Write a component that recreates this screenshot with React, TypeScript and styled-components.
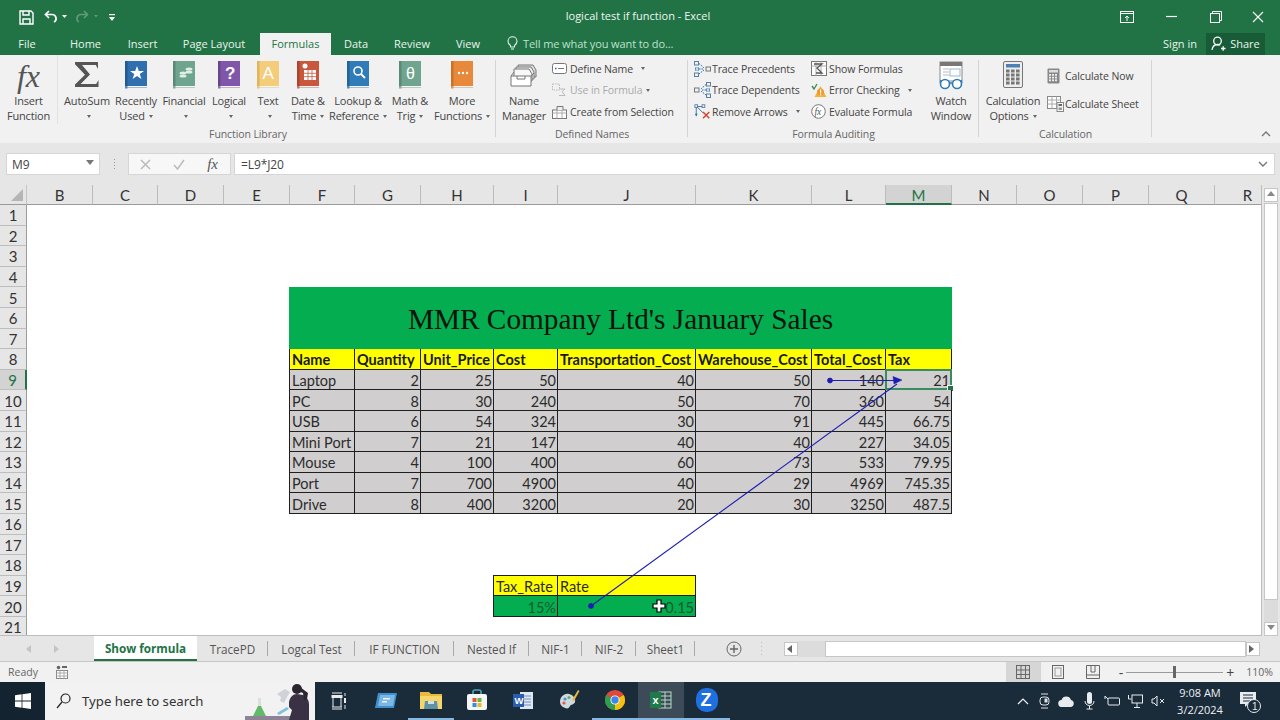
import styled, { createGlobalStyle } from "styled-components";
import type { ReactNode } from "react";

const GlobalStyle = createGlobalStyle`
  html, body { margin: 0; padding: 0; overflow: hidden; }
  body { font-family: "Open Sans", "Noto Sans", sans-serif; }
`;

const COLUMNS = ["B", "C", "D", "E", "F", "G", "H", "I", "J", "K", "L", "M", "N", "O", "P", "Q", "R"];
const ROWS = Array.from({ length: 21 }, (_, i) => i + 1);
const HEADERS = ["Name", "Quantity", "Unit_Price", "Cost", "Transportation_Cost", "Warehouse_Cost", "Total_Cost", "Tax"];
const DATA: (string | number)[][] = [
  ["Laptop", 2, 25, 50, 40, 50, 140, 21],
  ["PC", 8, 30, 240, 50, 70, 360, 54],
  ["USB", 6, 54, 324, 30, 91, 445, 66.75],
  ["Mini Port", 7, 21, 147, 40, 40, 227, 34.05],
  ["Mouse", 4, 100, 400, 60, 73, 533, 79.95],
  ["Port", 7, 700, 4900, 40, 29, 4969, 745.35],
  ["Drive", 8, 400, 3200, 20, 30, 3250, 487.5],
];
const SHEETS = [
  { name: "TracePD", w: 71 },
  { name: "Logcal Test", w: 87 },
  { name: "IF FUNCTION", w: 99 },
  { name: "Nested If", w: 75 },
  { name: "NIF-1", w: 53 },
  { name: "NIF-2", w: 54 },
  { name: "Sheet1", w: 59 },
];

const Window = styled.div`
  width: 1280px;
  height: 720px;
  display: flex;
  flex-direction: column;
  overflow: hidden;
  background: #fff;
`;

/* title bar */
const TitleBar = styled.header`
  height: 33px;
  flex: none;
  display: grid;
  grid-template-columns: 1fr auto 1fr;
  align-items: center;
  background: #217346;
  color: #eef6f1;
`;
const QuickAccess = styled.div`
  display: flex;
  align-items: center;
  padding-left: 19px;
  padding-top: 1px;
`;
const QatSlot = styled.span<{ $w: number }>`
  width: ${({ $w }) => $w}px;
  display: flex;
  align-items: center;
`;
const Title = styled.div`
  font-size: 11px;
  padding: 0 4px 2px 0;
`;
const WindowControls = styled.div`
  display: flex;
  justify-content: flex-end;
  align-items: center;
  gap: 30px;
  padding-right: 16px;
`;

/* tabs */
const TabRow = styled.nav`
  height: 22px;
  flex: none;
  display: flex;
  align-items: stretch;
  background: #217346;
`;
const Tab = styled.div<{ $w: number; $active?: boolean }>`
  width: ${({ $w }) => $w}px;
  padding-bottom: 2px;
  box-sizing: border-box;
  display: flex;
  align-items: center;
  justify-content: center;
  font-size: 11px;
  color: ${({ $active }) => ($active ? "#217346" : "#e9f4ed")};
  background: ${({ $active }) => ($active ? "#f1f1f1" : "transparent")};
`;
const TellMe = styled.div`
  margin-left: 14px;
  padding-bottom: 2px;
  display: flex;
  align-items: center;
  gap: 5px;
  font-size: 11px;
  letter-spacing: -0.1px;
  color: #bfe2cd;
`;
const SignIn = styled.div`
  margin-left: auto;
  padding-bottom: 2px;
  display: flex;
  align-items: center;
  font-size: 11px;
  color: #e9f4ed;
`;
const Share = styled.div`
  width: 59px;
  margin: 0 15px 0 9px;
  padding-bottom: 1px;
  box-sizing: border-box;
  display: flex;
  align-items: center;
  justify-content: center;
  gap: 4px;
  font-size: 11px;
  color: #e9f4ed;
  background: #185c37;
`;

/* ribbon */
const Ribbon = styled.section`
  height: 88px;
  flex: none;
  display: flex;
  position: relative;
  background: #f1f1f1;
  color: #444;
`;
const Group = styled.div<{ $w: number }>`
  width: ${({ $w }) => $w}px;
  flex: none;
  display: flex;
  flex-direction: column;
  position: relative;
  &::after {
    content: "";
    position: absolute;
    right: 0;
    top: 5px;
    bottom: 6px;
    width: 1px;
    background: #d4d4d4;
  }
`;
const GroupBody = styled.div<{ $pad?: number }>`
  flex: 1;
  display: flex;
  padding-left: ${({ $pad }) => $pad ?? 0}px;
`;
const GroupLabel = styled.div`
  height: 19px;
  padding-top: 1px;
  box-sizing: border-box;
  text-align: center;
  font-size: 10.5px;
  letter-spacing: -0.1px;
  line-height: 19px;
  color: #666;
`;
const LargeButton = styled.div<{ $w: number; $divided?: boolean; $ml?: number }>`
  width: ${({ $w }) => $w}px;
  margin-left: ${({ $ml }) => $ml ?? 0}px;
  flex: none;
  padding-top: 6px;
  display: flex;
  flex-direction: column;
  align-items: center;
  white-space: nowrap;
  font-size: 11px;
  letter-spacing: -0.2px;
  line-height: 15px;
  border-right: ${({ $divided }) => ($divided ? "1px solid #e2e2e2" : "none")};
`;
const IconBox = styled.div`
  height: 32px;
  display: flex;
  align-items: flex-start;
  justify-content: center;
`;
const FxGlyph = styled.span`
  font-family: "Liberation Serif", serif;
  font-style: italic;
  font-size: 32px;
  line-height: 30px;
  letter-spacing: 0;
  color: #555;
`;
const Caret = styled.span`
  display: inline-block;
  width: 0;
  height: 0;
  margin-left: 4px;
  vertical-align: 2px;
  border-left: 2.5px solid transparent;
  border-right: 2.5px solid transparent;
  border-top: 3px solid #666;
`;
const WideCaret = styled(Caret)`
  margin-left: 8px;
`;
const SmallColumn = styled.div<{ $w: number; $top: number; $gap?: number; $ml?: number }>`
  width: ${({ $w }) => $w}px;
  margin-left: ${({ $ml }) => $ml ?? 0}px;
  flex: none;
  padding-top: ${({ $top }) => $top}px;
  display: flex;
  flex-direction: column;
  gap: ${({ $gap }) => $gap ?? 0}px;
`;
const SmallButton = styled.div<{ $dim?: boolean }>`
  height: 21.5px;
  display: flex;
  align-items: center;
  white-space: nowrap;
  font-size: 10.5px;
  letter-spacing: -0.1px;
  color: ${({ $dim }) => ($dim ? "#aaa" : "#444")};
`;
const IconSlot = styled.span`
  width: 18px;
  flex: none;
  display: flex;
  align-items: center;
`;
const CollapseRibbon = styled.div`
  position: absolute;
  right: 9px;
  bottom: 6px;
  display: flex;
`;

/* formula bar */
const FormulaBar = styled.div`
  height: 42px;
  flex: none;
  box-sizing: border-box;
  padding: 10px 5px 10px 6px;
  display: flex;
  align-items: stretch;
  background: #e6e6e6;
  font-size: 12px;
  letter-spacing: -0.1px;
  color: #444;
`;
const NameBox = styled.div`
  width: 94px;
  box-sizing: border-box;
  padding: 0 5px 0 5px;
  display: flex;
  align-items: center;
  justify-content: space-between;
  background: #fff;
  border: 1px solid #d6d6d6;
`;
const BarDots = styled.div`
  width: 28px;
  display: flex;
  align-items: center;
  justify-content: center;
`;
const FormulaButtons = styled.div`
  width: 103px;
  box-sizing: border-box;
  display: flex;
  align-items: center;
  justify-content: space-around;
  padding: 0 1px 0 0;
  background: #f7f7f7;
  border: 1px solid #d6d6d6;
`;
const FormulaInput = styled.div`
  flex: 1;
  margin-left: 3px;
  box-sizing: border-box;
  padding: 0 6px;
  display: flex;
  align-items: center;
  justify-content: space-between;
  background: #fff;
  border: 1px solid #d6d6d6;
`;
const SmallFx = styled.span`
  font-family: "Liberation Serif", serif;
  font-style: italic;
  font-size: 15px;
  color: #555;
`;

/* sheet */
const SheetArea = styled.main`
  height: 451px;
  flex: none;
  display: flex;
  background: #e6e6e6;
`;
const Sheet = styled.div`
  position: relative;
  width: 1262px;
  height: 451px;
  flex: none;
  overflow: hidden;
  display: grid;
  grid-template-columns: 27px 66px 65px 66px 66px 65px 66px 73px 64px 138px 116px 74px 66px 65px 66px 66px 66px 66px;
  grid-template-rows: 20px repeat(21, 20.6px);
  background: #fff;
  font-family: Lato, "Liberation Sans", sans-serif;
  font-size: 14px;
  color: #2b2b2b;
  border-bottom: 1px solid #bdbdbd;
  border-right: 1px solid #bdbdbd;
  box-sizing: border-box;
`;
const Corner = styled.div`
  grid-column: 1;
  grid-row: 1;
  position: relative;
  background: #e6e6e6;
  border-bottom: 1px solid #9b9b9b;
  border-right: 1px solid #c4c4c4;
  &::after {
    content: "";
    position: absolute;
    right: 3px;
    bottom: 3px;
    border-left: 12px solid transparent;
    border-bottom: 12px solid #b5b5b5;
  }
`;
const ColumnHead = styled.div<{ $c: number; $on?: boolean }>`
  grid-column: ${({ $c }) => $c};
  grid-row: 1;
  padding-top: 1px;
  box-sizing: border-box;
  display: flex;
  align-items: center;
  justify-content: center;
  font-size: 15px;
  background: ${({ $on }) => ($on ? "#d3d3d3" : "#e6e6e6")};
  color: ${({ $on }) => ($on ? "#217346" : "#333")};
  border-right: 1px solid #bcbcbc;
  border-bottom: ${({ $on }) => ($on ? "2px solid #217346" : "1px solid #9b9b9b")};
`;
const RowHead = styled.div<{ $r: number; $on?: boolean }>`
  grid-column: 1;
  grid-row: ${({ $r }) => $r + 1};
  padding-top: 1px;
  box-sizing: border-box;
  display: flex;
  align-items: center;
  justify-content: center;
  font-size: 15px;
  background: ${({ $on }) => ($on ? "#d3d3d3" : "#e6e6e6")};
  color: ${({ $on }) => ($on ? "#217346" : "#333")};
  border-bottom: 1px solid #bdbdbd;
  border-right: ${({ $on }) => ($on ? "2px solid #217346" : "1px solid #9b9b9b")};
`;
const TitleCell = styled.div`
  grid-column: 6 / 14;
  grid-row: 6 / 9;
  margin-left: -1px;
  padding-top: 2px;
  box-sizing: border-box;
  display: flex;
  align-items: center;
  justify-content: center;
  background: #04ad50;
  font-family: "Liberation Serif", serif;
  font-size: 29.3px;
  color: #08140c;
`;
const Cell = styled.div<{ $c: number; $r: number; $bg: string; $head?: boolean; $num?: boolean; $left?: boolean; $top?: boolean; $ink?: string }>`
  grid-column: ${({ $c }) => $c};
  grid-row: ${({ $r }) => $r};
  position: relative;
  box-sizing: border-box;
  padding: 2px 1px 0 2px;
  display: flex;
  align-items: center;
  justify-content: ${({ $num }) => ($num ? "flex-end" : "flex-start")};
  white-space: nowrap;
  overflow: visible;
  background: ${({ $bg }) => $bg};
  font-weight: ${({ $head }) => ($head ? 700 : 400)};
  font-size: 14.5px;
  color: ${({ $ink }) => $ink ?? "#2b2b2b"};
  border-right: 1px solid #1f1f1f;
  border-bottom: 1px solid #1f1f1f;
  border-left: ${({ $left }) => ($left ? "1px solid #1f1f1f" : "none")};
  border-top: ${({ $top }) => ($top ? "1px solid #1f1f1f" : "none")};
  margin-left: ${({ $left }) => ($left ? "-1px" : "0")};
  margin-top: ${({ $top }) => ($top ? "-1px" : "0")};
`;
const SelectedFrame = styled.div`
  position: absolute;
  inset: -1px -1px -1px -1px;
  border: 2px solid #3c8a60;
  pointer-events: none;
  &::after {
    content: "";
    position: absolute;
    right: -4px;
    bottom: -4px;
    width: 5px;
    height: 5px;
    background: #217346;
    border: 1px solid #fff;
  }
`;
const Overlay = styled.svg`
  position: absolute;
  left: 0;
  top: 0;
  width: 1262px;
  height: 451px;
  pointer-events: none;
`;
const VScroll = styled.div`
  flex: 1;
  display: flex;
  flex-direction: column;
  align-items: center;
  padding: 3px 1px 0;
`;
const ScrollButton = styled.div`
  width: 14px;
  height: 14px;
  flex: none;
  display: flex;
  align-items: center;
  justify-content: center;
  background: #fff;
  border: 1px solid #c6c6c6;
  box-sizing: border-box;
`;
const VThumb = styled.div`
  width: 14px;
  height: 397px;
  flex: none;
  margin-top: 1px;
  background: #fff;
  border: 1px solid #c6c6c6;
  box-sizing: border-box;
`;
const VTrack = styled.div`
  width: 14px;
  flex: 1;
  background: #dcdcdc;
`;

/* sheet tabs */
const TabsBar = styled.div`
  height: 26px;
  flex: none;
  display: flex;
  align-items: stretch;
  padding-left: 21px;
  background: #e6e6e6;
  font-size: 11.7px;
  color: #555;
  border-bottom: 1px solid #c6c6c6;
  box-sizing: border-box;
`;
const NavArrows = styled.div`
  width: 73px;
  display: flex;
  gap: 20px;
  align-items: center;
  padding-left: 5px;
  box-sizing: border-box;
`;
const SheetTab = styled.div<{ $w: number; $active?: boolean }>`
  width: ${({ $w }) => $w}px;
  flex: none;
  box-sizing: border-box;
  display: flex;
  align-items: center;
  justify-content: center;
  font-weight: ${({ $active }) => ($active ? 700 : 400)};
  color: ${({ $active }) => ($active ? "#217346" : "#555")};
  background: ${({ $active }) => ($active ? "#fff" : "transparent")};
  border-bottom: ${({ $active }) => ($active ? "2px solid #217346" : "none")};
  position: relative;
  ${({ $active }) =>
    !$active &&
    `&::after {
      content: "";
      position: absolute;
      right: 0;
      top: 5px;
      bottom: 5px;
      width: 1px;
      background: #a9a9a9;
    }`}
`;
const AddSheet = styled.div`
  margin-left: 31px;
  display: flex;
  align-items: center;
`;
const GripDots = styled.div`
  margin-left: 18px;
  display: flex;
  align-items: center;
`;
const HScroll = styled.div`
  margin-left: auto;
  margin-right: 20px;
  width: 476px;
  display: flex;
  align-items: center;
`;
const HButton = styled.div`
  width: 14px;
  height: 14px;
  box-sizing: border-box;
  display: flex;
  align-items: center;
  justify-content: center;
  background: #fff;
  border: 1px solid #c6c6c6;
`;
const HTrack = styled.div`
  width: 27px;
  height: 16px;
  background: #dcdcdc;
`;
const HThumb = styled.div`
  flex: 1;
  height: 16px;
  box-sizing: border-box;
  background: #fff;
  border: 1px solid #c6c6c6;
`;

/* status bar */
const StatusBar = styled.footer`
  height: 20px;
  flex: none;
  display: flex;
  align-items: stretch;
  padding: 0 7px 0 8px;
  background: #f1f1f1;
  font-size: 10.5px;
  color: #666;
`;
const StatusLeft = styled.div`
  flex: 1;
  display: flex;
  align-items: center;
  gap: 17px;
`;
const ViewButton = styled.div<{ $on?: boolean }>`
  width: 35px;
  display: flex;
  align-items: center;
  justify-content: center;
  background: ${({ $on }) => ($on ? "#d6d6d6" : "transparent")};
`;
const ZoomArea = styled.div`
  display: flex;
  align-items: center;
  margin-left: 8px;
`;
const ZoomTrack = styled.div`
  width: 97px;
  height: 1px;
  margin: 0 3px;
  position: relative;
  background: #9a9a9a;
  &::after {
    content: "";
    position: absolute;
    left: 47px;
    top: -6px;
    width: 3px;
    height: 12px;
    background: #666;
  }
`;
const ZoomSign = styled.span`
  font-size: 14px;
  line-height: 13px;
  color: #444;
`;
const ZoomValue = styled.span`
  margin-left: 12px;
`;

/* taskbar */
const Taskbar = styled.footer`
  height: 38px;
  flex: none;
  display: flex;
  align-items: stretch;
  background: #1a2b3a;
  color: #eef1f4;
`;
const StartButton = styled.div`
  width: 45px;
  flex: none;
  display: flex;
  align-items: center;
  justify-content: center;
  background: #13232f;
`;
const SearchBox = styled.div`
  width: 270px;
  flex: none;
  position: relative;
  overflow: hidden;
  display: flex;
  align-items: center;
  gap: 11px;
  padding-left: 11px;
  box-sizing: border-box;
  background: #f2f2f2;
  font-family: "Noto Sans", sans-serif;
  font-size: 13.2px;
  color: #333;
`;
const SearchArt = styled.svg`
  position: absolute;
  right: 0;
  bottom: 0;
`;
const TaskView = styled.div`
  width: 47px;
  flex: none;
  display: flex;
  align-items: center;
  justify-content: center;
`;
const TaskItem = styled.div<{ $active?: boolean; $current?: boolean }>`
  width: 46px;
  flex: none;
  box-sizing: border-box;
  display: flex;
  align-items: center;
  justify-content: center;
  background: ${({ $current }) => ($current ? "#3c4b57" : "transparent")};
  border-bottom: 2px solid ${({ $active }) => ($active ? "#86b9e2" : "transparent")};
`;
const Tray = styled.div`
  margin-left: auto;
  padding-right: 14px;
  display: flex;
  align-items: center;
  gap: 7px;
`;
const TrayIcon = styled.span<{ $w: number }>`
  width: ${({ $w }) => $w}px;
  display: flex;
  justify-content: center;
`;
const Clock = styled.div`
  width: 68px;
  margin-left: -7px;
  text-align: center;
  font-size: 11px;
  line-height: 17px;
`;
const Notify = styled.div`
  width: 32px;
  margin-left: -7px;
  display: flex;
  justify-content: center;
`;

/* ---- drawings ---- */
function Book({ color, dark, children }: { color: string; dark: string; children?: ReactNode }) {
  return (
    <svg width="24" height="28" viewBox="0 0 24 28">
      <rect x="1" y="0" width="22" height="25" fill={color} />
      <rect x="1" y="0" width="2.5" height="25" fill={dark} />
      <path d="M1 25h22v1.6H3.5v1H1z" fill={dark} opacity="0.7" />
      <rect x="3.5" y="25" width="19.5" height="1" fill="#f5f5f5" />
      {children}
    </svg>
  );
}

function Sigma() {
  return (
    <svg width="26" height="27" viewBox="0 0 26 27">
      <path d="M1 1h23v7l-2.2-4H8l8 9.5L6.6 23h15.6l2.3-4v7H1v-2.4L11 13.8 1 3.2z" fill="#555" />
    </svg>
  );
}

function NameManagerIcon() {
  return (
    <svg width="30" height="28" viewBox="0 0 30 28" fill="none" stroke="#777" strokeWidth="1">
      <path d="M9 4h15l3 5v7H9z" fill="#dcdcdc" />
      <path d="M7 6h15l3 5v7H7z" fill="#eee" />
      <path d="M5 8h15l3 5v7H5z" fill="#f8f8f8" />
      <path d="M2 15h20v10H2z" fill="#fff" />
      <path d="M2 15l3-4M22 15l3-3" />
      <path d="M8 15v3h8v-3" />
    </svg>
  );
}

function WatchIcon() {
  return (
    <svg width="28" height="30" viewBox="0 0 28 30" fill="none">
      <rect x="3" y="1" width="22" height="19" fill="#fff" stroke="#888" />
      <rect x="3" y="1" width="22" height="4" fill="#777" />
      <path d="M6 8h6M6 11h6M6 14h6" stroke="#bbb" />
      <rect x="13" y="8" width="10" height="7" stroke="#9ab7d3" />
      <circle cx="8" cy="23" r="4.5" fill="#fff" stroke="#2f7cb8" strokeWidth="1.6" />
      <circle cx="20" cy="23" r="4.5" fill="#fff" stroke="#2f7cb8" strokeWidth="1.6" />
      <path d="M12 22h4M3 22l1-3M25 22l-1-3" stroke="#2f7cb8" strokeWidth="1.4" />
    </svg>
  );
}

function CalcLarge() {
  return (
    <svg width="20" height="27" viewBox="0 0 20 27">
      <rect x="0.5" y="0.5" width="19" height="26" rx="1.5" fill="#eee" stroke="#777" />
      <rect x="3" y="3" width="14" height="3.5" fill="#4e7fb5" />
      {[8.5, 12.5, 16.5, 20.5].map((y) =>
        [3, 8, 13].map((x) => <rect key={`${x}-${y}`} x={x} y={y} width="3.6" height="3" fill="#777" />),
      )}
    </svg>
  );
}

function CalcSmall() {
  return (
    <svg width="13" height="16" viewBox="0 0 13 16">
      <rect x="0.5" y="0.5" width="12" height="15" rx="1" fill="#888" />
      <rect x="2" y="2" width="9" height="2.5" fill="#ddd" />
      {[6, 8.7, 11.4].map((y) =>
        [2, 5, 8].map((x) => <rect key={`${x}-${y}`} x={x} y={y} width="2" height="1.8" fill="#eee" />),
      )}
    </svg>
  );
}

function CalcSheetIcon() {
  return (
    <svg width="17" height="16" viewBox="0 0 17 16" fill="none" stroke="#888">
      <rect x="0.5" y="0.5" width="13" height="12" fill="#fff" />
      <path d="M0.5 4h13M0.5 8h13M5 .5v12M9.5 .5v12" stroke="#aaa" />
      <rect x="10" y="6.5" width="6.5" height="9" fill="#f4f4f4" />
      <rect x="11.5" y="8" width="3.5" height="2" fill="#666" stroke="none" />
      <rect x="11.5" y="11.5" width="3.5" height="2.5" fill="#999" stroke="none" />
    </svg>
  );
}

function TraceIcon({ flip }: { flip?: boolean }) {
  return (
    <svg width="17" height="16" viewBox="0 0 17 16" fill="none">
      <g transform={flip ? "translate(17 0) scale(-1 1)" : undefined}>
        <rect x="0.5" y="0.5" width="4" height="3.5" stroke="#5b7ea5" />
        <rect x="0.5" y="12" width="4" height="3.5" stroke="#5b7ea5" />
        <path d="M1 6.5h4v3H1z" fill="#2d6da8" />
        <path d="M1.5 8h3M3 6.5v3" stroke="#fff" />
        <path d="M5 2.5L10 7M5 13L10 9M5 8h5" stroke="#2d6da8" strokeDasharray="1.5 1" />
        <rect x="12" y="6" width="4.5" height="4" stroke="#777" />
      </g>
    </svg>
  );
}

function RemoveArrowsIcon() {
  return (
    <svg width="18" height="17" viewBox="0 0 20 17" fill="none">
      <rect x="1" y="1" width="3" height="3" stroke="#5b7ea5" />
      <rect x="9" y="1" width="3" height="3" stroke="#5b7ea5" />
      <path d="M4 3h5M2.5 4v9M4 4l6 6" stroke="#2d6da8" />
      <path d="M1 11l1.5 3L4 11" fill="#2d6da8" />
      <path d="M10 9l7 7M17 9l-7 7" stroke="#d2452e" strokeWidth="1.6" />
    </svg>
  );
}

function ShowFormulasIcon() {
  return (
    <svg width="16" height="15" viewBox="0 0 16 15" fill="none" stroke="#777">
      <rect x="0.5" y="0.5" width="15" height="14" fill="#fff" />
      <path d="M0.5 5h15M5 .5v14M10 .5v14" stroke="#aaa" />
      <path d="M3 3l8 0-5 4 5 5H5" stroke="#555" strokeWidth="1.3" />
    </svg>
  );
}

function ErrorCheckIcon() {
  return (
    <svg width="16" height="15" viewBox="0 0 16 15">
      <path d="M1 3l2 3 3-5" fill="none" stroke="#3e8e5a" strokeWidth="1.4" />
      <path d="M9.5 3L15.5 14H3.5z" fill="#f2b33d" />
      <circle cx="9.5" cy="9" r="3.5" fill="#ee9a2e" />
      <rect x="9" y="6.5" width="1.2" height="4" fill="#fff" />
      <rect x="9" y="11.2" width="1.2" height="1.2" fill="#fff" />
    </svg>
  );
}

function EvaluateIcon() {
  return (
    <svg width="15" height="15" viewBox="0 0 15 15">
      <circle cx="7.5" cy="7.5" r="6.8" fill="#fff" stroke="#777" />
      <text x="3.5" y="11" fontFamily="Liberation Serif" fontStyle="italic" fontSize="9.5" fill="#555">
        fx
      </text>
    </svg>
  );
}

function DefineNameIcon() {
  return (
    <svg width="15" height="11" viewBox="0 0 15 11" fill="none" stroke="#777">
      <rect x="0.5" y="0.5" width="14" height="10" rx="2" fill="#fff" />
      <path d="M3 5.5h1.5" stroke="#2d6da8" strokeWidth="1.4" />
      <path d="M6 5.5h6" />
    </svg>
  );
}

function UseFormulaIcon() {
  return (
    <svg width="15" height="15" viewBox="0 0 15 15" fill="none" stroke="#bbb">
      <rect x="0.5" y="1" width="7" height="6" strokeDasharray="1.5 1" />
      <path d="M7 6h6l-3 2.5 3 4H7" />
    </svg>
  );
}

function CreateSelectionIcon() {
  return (
    <svg width="15" height="14" viewBox="0 0 15 14" fill="none" stroke="#777">
      <rect x="0.5" y="5" width="14" height="8.5" fill="#fff" />
      <path d="M0.5 8h14M5 5v8.5M10 5v8.5" stroke="#aaa" />
      <path d="M5 5V1.5h6V5" fill="#eee" />
    </svg>
  );
}

function Chevron({ dir = "down", color = "#777", size = 10 }: { dir?: "down" | "up"; color?: string; size?: number }) {
  return (
    <svg width={size} height={size * 0.6} viewBox="0 0 10 6" fill="none" stroke={color} strokeWidth="1.4">
      <path d={dir === "down" ? "M1 1l4 4 4-4" : "M1 5l4-4 4 4"} />
    </svg>
  );
}

function Triangle({ dir, color = "#777" }: { dir: "up" | "down" | "left" | "right"; color?: string }) {
  const points = { up: "0,5 4,0 8,5", down: "0,0 8,0 4,5", left: "5,0 5,8 0,4", right: "0,0 0,8 5,4" }[dir];
  return (
    <svg width="8" height="8" viewBox="0 0 8 8">
      <polygon points={points} fill={color} />
    </svg>
  );
}

export default function App() {
  return (
    <Window>
      <GlobalStyle />

      <TitleBar>
        <QuickAccess>
          <QatSlot $w={25}>
            <svg width="15" height="15" viewBox="0 0 15 15" fill="none" stroke="#fff" strokeWidth="1.4">
              <path d="M1 1h11l2 2v11H1z" />
              <path d="M4 1v4h6V1M4 14V9h7v5" />
            </svg>
          </QatSlot>
          <QatSlot $w={32}>
            <svg width="24" height="14" viewBox="0 0 24 14" fill="none" stroke="#fff" strokeWidth="1.7">
              <path d="M5 1L1.5 4.5 5 8" />
              <path d="M2 4.5h6a4 4 0 0 1 2 7.5" />
              <polygon points="18,5 23,5 20.5,8" fill="#fff" stroke="none" />
            </svg>
          </QatSlot>
          <QatSlot $w={32}>
            <svg width="24" height="14" viewBox="0 0 24 14" fill="none" stroke="#5f9b7b" strokeWidth="1.7">
              <path d="M8 1l3.5 3.5L8 8" />
              <path d="M11 4.5H5a4 4 0 0 0-2 7.5" />
              <polygon points="18,5 22,5 20,7.5" fill="#5f9b7b" stroke="none" />
            </svg>
          </QatSlot>
          <QatSlot $w={10}>
            <svg width="8" height="9" viewBox="0 0 8 9">
              <rect x="1" y="1" width="6" height="1.2" fill="#fff" />
              <polygon points="1,4 7,4 4,8" fill="#fff" />
            </svg>
          </QatSlot>
        </QuickAccess>
        <Title>logical test if function - Excel</Title>
        <WindowControls>
          <svg width="14" height="12" viewBox="0 0 14 12" fill="none" stroke="#fff">
            <rect x="0.5" y="0.5" width="13" height="11" />
            <path d="M0.5 2.5h13M7 10V5M5 7l2-2 2 2" />
          </svg>
          <svg width="16" height="12" viewBox="0 0 16 12" stroke="#fff" strokeWidth="1.2">
            <path d="M2 5.5h11" />
          </svg>
          <svg width="12" height="12" viewBox="0 0 12 12" fill="none" stroke="#fff">
            <rect x="0.5" y="2.5" width="9" height="9" />
            <path d="M2.5 2.5v-2h9v9h-2" />
          </svg>
          <svg width="12" height="12" viewBox="0 0 12 12" stroke="#fff" strokeWidth="1.1">
            <path d="M1 1l10 10M11 1L1 11" />
          </svg>
        </WindowControls>
      </TitleBar>

      <TabRow>
        <Tab $w={54}>File</Tab>
        <Tab $w={63}>Home</Tab>
        <Tab $w={51}>Insert</Tab>
        <Tab $w={92}>Page Layout</Tab>
        <Tab $w={71} $active>
          Formulas
        </Tab>
        <Tab $w={50}>Data</Tab>
        <Tab $w={62}>Review</Tab>
        <Tab $w={50}>View</Tab>
        <TellMe>
          <svg width="11" height="14" viewBox="0 0 11 14" fill="none" stroke="#e3f3ea" strokeWidth="1.1">
            <path d="M3.5 9.5C2 8.5 1 7 1 5.2a4.5 4.5 0 0 1 9 0c0 1.8-1 3.3-2.5 4.3V11h-4z" />
            <path d="M4 13h3" />
          </svg>
          Tell me what you want to do...
        </TellMe>
        <SignIn>Sign in</SignIn>
        <Share>
          <svg width="15" height="15" viewBox="0 0 15 15" fill="none" stroke="#fff" strokeWidth="1.3">
            <circle cx="6.5" cy="5" r="3.8" />
            <path d="M1 14c.5-3.5 2.5-5.5 5.5-5.5 1 0 2 .3 2.5.7M10 12.5h4.5M12.2 10.3v4.4" />
          </svg>
          Share
        </Share>
      </TabRow>

      <Ribbon>
        <Group $w={496}>
          <GroupBody>
            <LargeButton $w={57} $divided>
              <IconBox>
                <FxGlyph>fx</FxGlyph>
              </IconBox>
              <span>Insert</span>
              <span>Function</span>
            </LargeButton>
            <LargeButton $w={48} $ml={5}>
              <IconBox>
                <Sigma />
              </IconBox>
              <span>AutoSum</span>
              <span>
                <Caret />
              </span>
            </LargeButton>
            <LargeButton $w={50}>
              <IconBox>
                <Book color="#2f6fae" dark="#245a90">
                  <polygon points="13,5 14.8,10 20,10 15.8,13 17.4,18 13,15 8.6,18 10.2,13 6,10 11.2,10" fill="#fff" />
                </Book>
              </IconBox>
              <span>Recently</span>
              <span>
                Used
                <Caret />
              </span>
            </LargeButton>
            <LargeButton $w={46}>
              <IconBox>
                <Book color="#6fa58f" dark="#5a8a77">
                  <ellipse cx="17" cy="8" rx="3.5" ry="1.6" fill="#dfeee7" />
                  <ellipse cx="17" cy="11" rx="3.5" ry="1.6" fill="#dfeee7" />
                  <ellipse cx="11" cy="12" rx="3.5" ry="1.6" fill="#dfeee7" />
                  <ellipse cx="11" cy="15" rx="3.5" ry="1.6" fill="#dfeee7" />
                </Book>
              </IconBox>
              <span>Financial</span>
              <span>
                <Caret />
              </span>
            </LargeButton>
            <LargeButton $w={44}>
              <IconBox>
                <Book color="#7f56aa" dark="#68468c">
                  <text x="8" y="18" fontFamily="Liberation Sans" fontWeight="700" fontSize="17" fill="#fff">
                    ?
                  </text>
                </Book>
              </IconBox>
              <span>Logical</span>
              <span>
                <Caret />
              </span>
            </LargeButton>
            <LargeButton $w={34}>
              <IconBox>
                <Book color="#f3cd7c" dark="#e0b55e">
                  <text x="6.5" y="18" fontFamily="Liberation Sans" fontSize="17" fill="#fff">
                    A
                  </text>
                </Book>
              </IconBox>
              <span>Text</span>
              <span>
                <Caret />
              </span>
            </LargeButton>
            <LargeButton $w={46}>
              <IconBox>
                <Book color="#c9573c" dark="#a84630">
                  <circle cx="9" cy="5" r="2.5" fill="#fff" />
                  <rect x="8" y="9" width="12" height="10" fill="#fff" />
                  <path d="M8 12.3h12M8 15.6h12M12 9v10M16 9v10" stroke="#c9573c" strokeWidth="0.8" />
                </Book>
              </IconBox>
              <span>Date &amp;</span>
              <span>
                Time
                <Caret />
              </span>
            </LargeButton>
            <LargeButton $w={54}>
              <IconBox>
                <Book color="#2f7cb8" dark="#256497">
                  <circle cx="12" cy="10" r="4" fill="none" stroke="#fff" strokeWidth="1.6" />
                  <path d="M15 13l4 4" stroke="#fff" strokeWidth="1.8" />
                </Book>
              </IconBox>
              <span>Lookup &amp;</span>
              <span>
                Reference
                <Caret />
              </span>
            </LargeButton>
            <LargeButton $w={50}>
              <IconBox>
                <Book color="#6fa58f" dark="#5a8a77">
                  <text x="8" y="18" fontFamily="Liberation Sans" fontSize="16" fill="#fff">
                    θ
                  </text>
                </Book>
              </IconBox>
              <span>Math &amp;</span>
              <span>
                Trig
                <Caret />
              </span>
            </LargeButton>
            <LargeButton $w={54}>
              <IconBox>
                <Book color="#e8883a" dark="#c97228">
                  <circle cx="9" cy="12" r="1.2" fill="#fff" />
                  <circle cx="13" cy="12" r="1.2" fill="#fff" />
                  <circle cx="17" cy="12" r="1.2" fill="#fff" />
                </Book>
              </IconBox>
              <span>More</span>
              <span>
                Functions
                <Caret />
              </span>
            </LargeButton>
          </GroupBody>
          <GroupLabel>Function Library</GroupLabel>
        </Group>

        <Group $w={192}>
          <GroupBody $pad={2}>
            <LargeButton $w={52}>
              <IconBox>
                <NameManagerIcon />
              </IconBox>
              <span>Name</span>
              <span>Manager</span>
            </LargeButton>
            <SmallColumn $w={134} $top={3} $ml={2}>
              <SmallButton>
                <IconSlot>
                  <DefineNameIcon />
                </IconSlot>
                Define Name
                <WideCaret />
              </SmallButton>
              <SmallButton $dim>
                <IconSlot>
                  <UseFormulaIcon />
                </IconSlot>
                Use in Formula
                <Caret />
              </SmallButton>
              <SmallButton>
                <IconSlot>
                  <CreateSelectionIcon />
                </IconSlot>
                Create from Selection
              </SmallButton>
            </SmallColumn>
          </GroupBody>
          <GroupLabel>Defined Names</GroupLabel>
        </Group>

        <Group $w={291}>
          <GroupBody $pad={6}>
            <SmallColumn $w={117} $top={3}>
              <SmallButton>
                <IconSlot>
                  <TraceIcon />
                </IconSlot>
                Trace Precedents
              </SmallButton>
              <SmallButton>
                <IconSlot>
                  <TraceIcon flip />
                </IconSlot>
                Trace Dependents
              </SmallButton>
              <SmallButton>
                <IconSlot>
                  <RemoveArrowsIcon />
                </IconSlot>
                Remove Arrows
                <WideCaret />
              </SmallButton>
            </SmallColumn>
            <SmallColumn $w={115} $top={3}>
              <SmallButton>
                <IconSlot>
                  <ShowFormulasIcon />
                </IconSlot>
                Show Formulas
              </SmallButton>
              <SmallButton>
                <IconSlot>
                  <ErrorCheckIcon />
                </IconSlot>
                Error Checking
                <WideCaret />
              </SmallButton>
              <SmallButton>
                <IconSlot>
                  <EvaluateIcon />
                </IconSlot>
                Evaluate Formula
              </SmallButton>
            </SmallColumn>
            <LargeButton $w={50}>
              <IconBox>
                <WatchIcon />
              </IconBox>
              <span>Watch</span>
              <span>Window</span>
            </LargeButton>
          </GroupBody>
          <GroupLabel>Formula Auditing</GroupLabel>
        </Group>

        <Group $w={173}>
          <GroupBody $pad={3}>
            <LargeButton $w={62}>
              <IconBox>
                <CalcLarge />
              </IconBox>
              <span>Calculation</span>
              <span>
                Options
                <Caret />
              </span>
            </LargeButton>
            <SmallColumn $w={103} $top={10} $gap={7} $ml={3}>
              <SmallButton>
                <IconSlot>
                  <CalcSmall />
                </IconSlot>
                Calculate Now
              </SmallButton>
              <SmallButton>
                <IconSlot>
                  <CalcSheetIcon />
                </IconSlot>
                Calculate Sheet
              </SmallButton>
            </SmallColumn>
          </GroupBody>
          <GroupLabel>Calculation</GroupLabel>
        </Group>

        <CollapseRibbon>
          <Chevron dir="up" />
        </CollapseRibbon>
      </Ribbon>

      <FormulaBar>
        <NameBox>
          M9
          <Triangle dir="down" />
        </NameBox>
        <BarDots>
          <svg width="3" height="11" viewBox="0 0 3 11" fill="#999">
            <rect x="1" y="0" width="1" height="1" />
            <rect x="1" y="3" width="1" height="1" />
            <rect x="1" y="6" width="1" height="1" />
            <rect x="1" y="9" width="1" height="1" />
          </svg>
        </BarDots>
        <FormulaButtons>
          <svg width="11" height="11" viewBox="0 0 11 11" stroke="#bbb" strokeWidth="1.5">
            <path d="M1 1l9 9M10 1l-9 9" />
          </svg>
          <svg width="12" height="11" viewBox="0 0 12 11" fill="none" stroke="#bbb" strokeWidth="1.5">
            <path d="M1 6l3.5 4L11 1" />
          </svg>
          <SmallFx>fx</SmallFx>
        </FormulaButtons>
        <FormulaInput>
          =L9*J20
          <Chevron />
        </FormulaInput>
      </FormulaBar>

      <SheetArea>
        <Sheet>
          <Corner />
          {COLUMNS.map((col, i) => (
            <ColumnHead key={col} $c={i + 2} $on={col === "M"}>
              {col}
            </ColumnHead>
          ))}
          {ROWS.map((r) => (
            <RowHead key={r} $r={r} $on={r === 9}>
              {r}
            </RowHead>
          ))}

          <TitleCell>MMR Company Ltd's January Sales</TitleCell>

          {HEADERS.map((h, i) => (
            <Cell key={h} $c={i + 6} $r={9} $bg="#ffff00" $head $left={i === 0} $ink="#1a1a1a">
              {h}
            </Cell>
          ))}
          {DATA.map((row, r) =>
            row.map((value, c) => (
              <Cell key={`${r}-${c}`} $c={c + 6} $r={r + 10} $bg="#d0cece" $num={c > 0} $left={c === 0}>
                {value}
                {r === 0 && c === 7 && <SelectedFrame />}
              </Cell>
            )),
          )}

          <Cell $c={9} $r={20} $bg="#ffff00" $left $top>
            Tax_Rate
          </Cell>
          <Cell $c={10} $r={20} $bg="#ffff00" $top>
            Rate
          </Cell>
          <Cell $c={9} $r={21} $bg="#04ad50" $num $left $ink="#0f5a2e">
            15%
          </Cell>
          <Cell $c={10} $r={21} $bg="#04ad50" $num $ink="#0f5a2e">
            0.15
          </Cell>

          <Overlay viewBox="0 0 1262 451">
            <g stroke="#1d1db5" fill="#1d1db5">
              <line x1="830" y1="195.5" x2="895" y2="195.5" strokeWidth="1.2" />
              <circle cx="830" cy="195.5" r="2.4" />
              <polygon points="902,195 893,191.5 894,199" strokeWidth="0.5" />
              <line x1="591" y1="421" x2="897" y2="199" strokeWidth="1.1" />
              <circle cx="591" cy="421" r="2.4" />
            </g>
            <path d="M657 415h4v4h4v4h-4v4h-4v-4h-4v-4h4z" fill="#fff" stroke="#000" strokeWidth="1.2" />
          </Overlay>
        </Sheet>
        <VScroll>
          <ScrollButton>
            <Triangle dir="up" color="#888" />
          </ScrollButton>
          <VThumb />
          <VTrack />
          <ScrollButton>
            <Triangle dir="down" color="#888" />
          </ScrollButton>
        </VScroll>
      </SheetArea>

      <TabsBar>
        <NavArrows>
          <Triangle dir="left" color="#c4c4c4" />
          <Triangle dir="right" color="#c4c4c4" />
        </NavArrows>
        <SheetTab $w={103} $active>
          Show formula
        </SheetTab>
        {SHEETS.map((s) => (
          <SheetTab key={s.name} $w={s.w}>
            {s.name}
          </SheetTab>
        ))}
        <AddSheet>
          <svg width="16" height="16" viewBox="0 0 16 16" fill="none" stroke="#666">
            <circle cx="8" cy="8" r="7" />
            <path d="M8 4v8M4 8h8" strokeWidth="1.4" />
          </svg>
        </AddSheet>
        <GripDots>
          <svg width="3" height="14" viewBox="0 0 3 14" fill="#bbb">
            <rect x="1" y="0" width="1" height="1" />
            <rect x="1" y="4" width="1" height="1" />
            <rect x="1" y="8" width="1" height="1" />
            <rect x="1" y="12" width="1" height="1" />
          </svg>
        </GripDots>
        <HScroll>
          <HButton>
            <Triangle dir="left" color="#666" />
          </HButton>
          <HTrack />
          <HThumb />
          <HButton>
            <Triangle dir="right" color="#666" />
          </HButton>
        </HScroll>
      </TabsBar>

      <StatusBar>
        <StatusLeft>
          Ready
          <svg width="14" height="14" viewBox="0 0 14 14" fill="none" stroke="#888">
            <rect x="1.5" y="5.5" width="11" height="8" fill="#fff" />
            <path d="M1.5 8h11M1.5 11h11M5 5.5v8M9 5.5v8" stroke="#aaa" />
            <circle cx="3.5" cy="2.5" r="1.8" fill="#666" stroke="none" />
            <rect x="7" y="1" width="5" height="2" fill="#666" stroke="none" />
          </svg>
        </StatusLeft>
        <ViewButton $on>
          <svg width="14" height="14" viewBox="0 0 14 14" fill="none" stroke="#666">
            <rect x="0.5" y="0.5" width="13" height="13" />
            <path d="M0.5 5h13M0.5 9.5h13M5 .5v13M9.5 .5v13" />
          </svg>
        </ViewButton>
        <ViewButton>
          <svg width="12" height="14" viewBox="0 0 12 14" fill="none" stroke="#666">
            <rect x="0.5" y="0.5" width="11" height="13" />
            <rect x="3" y="3" width="6" height="8" stroke="#999" />
          </svg>
        </ViewButton>
        <ViewButton>
          <svg width="14" height="14" viewBox="0 0 14 14" fill="none" stroke="#666">
            <path d="M.5 13.5V.5h13v13zM.5 10h13M5 .5V7h4V.5" />
          </svg>
        </ViewButton>
        <ZoomArea>
          <ZoomSign>-</ZoomSign>
          <ZoomTrack />
          <ZoomSign>+</ZoomSign>
          <ZoomValue>110%</ZoomValue>
        </ZoomArea>
      </StatusBar>

      <Taskbar>
        <StartButton>
          <svg width="16" height="16" viewBox="0 0 16 16" fill="#fff">
            <path d="M0 2.2L6.6 1.3v6.3H0zM7.4 1.2L16 0v7.6H7.4zM0 8.4h6.6v6.3L0 13.8zM7.4 8.4H16V16l-8.6-1.2z" />
          </svg>
        </StartButton>
        <SearchBox>
          <svg width="15" height="16" viewBox="0 0 15 16" fill="none" stroke="#222" strokeWidth="1.2">
            <circle cx="9.5" cy="5.5" r="4.5" />
            <path d="M6 9l-5 6" />
          </svg>
          Type here to search
          <SearchArt width="76" height="38" viewBox="0 0 76 38">
            <rect x="6" y="34" width="50" height="4" fill="#8d8296" />
            <path d="M19 17h3v7l5 10H14l5-10z" fill="#62b96a" />
            <path d="M19 16h3v8h-3z" fill="#d9e2d9" />
            <path d="M38 31l10-6 2 2-10 6z" fill="#7ec1db" />
            <path d="M38 12l8-5 5 3-3 5-3 6-4-2 1-4z" fill="#cfd2d6" />
            <path d="M50 20c1-5 4-8 8-8l6 1c4 2 6 5 6 10v15H50l3-10-3-3z" fill="#3a3145" />
            <circle cx="58" cy="7" r="5" fill="#2c2530" />
            <path d="M61 5l8 6-1 6-3 1-1-7-5-2z" fill="#2c2530" />
          </SearchArt>
        </SearchBox>
        <TaskView>
          <svg width="16" height="18" viewBox="0 0 16 18" fill="none" stroke="#e8ecef">
            <path d="M1 1h10M1 17h10M1 15h10" />
            <rect x="1" y="3.5" width="10" height="2" fill="#e8ecef" />
            <path d="M2 6v9M10 6v9" />
            <rect x="13" y="6" width="2" height="5" fill="#e8ecef" stroke="none" />
            <path d="M14 1v3M14 13v4" />
          </svg>
        </TaskView>
        <TaskItem>
          <svg width="23" height="17" viewBox="0 0 23 17">
            <path d="M4 1h19l-3 15H1z" fill="#3f8fcf" />
            <path d="M6 3h15l-2 11H4z" fill="#7cb6e3" />
            <path d="M9 6h7v1.5H9zM8 9h5v1.5H8z" fill="#e8f3fb" />
          </svg>
        </TaskItem>
        <TaskItem $active>
          <svg width="22" height="20" viewBox="0 0 22 20">
            <path d="M0 2h9l2 2h11v15H0z" fill="#e8b93c" />
            <path d="M0 6h22v13H0z" fill="#f6d56a" />
            <path d="M5 11h12l1 8H4z" fill="#5f93a8" />
            <rect x="8" y="11" width="6" height="3" fill="#cfe0e6" />
          </svg>
        </TaskItem>
        <TaskItem>
          <svg width="20" height="22" viewBox="0 0 20 22">
            <rect x="0" y="5" width="20" height="16" rx="2" fill="#f4f6f7" />
            <path d="M6 5V3a2 2 0 0 1 2-2h4a2 2 0 0 1 2 2v2" fill="none" stroke="#49a7b5" strokeWidth="1.6" />
            <rect x="5.5" y="9" width="4" height="4" fill="#e2573a" />
            <rect x="10.5" y="9" width="4" height="4" fill="#6cb33f" />
            <rect x="5.5" y="14" width="4" height="4" fill="#2f8fd8" />
            <rect x="10.5" y="14" width="4" height="4" fill="#f0b429" />
          </svg>
        </TaskItem>
        <TaskItem>
          <svg width="20" height="19" viewBox="0 0 20 19">
            <rect x="7" y="1" width="13" height="17" fill="#dfe7f3" />
            <path d="M9 5h9M9 8h9M9 11h9M9 14h9" stroke="#6f8fc6" />
            <rect x="0" y="3" width="11" height="13" fill="#2b5cad" />
            <text x="1.5" y="13" fontFamily="Liberation Sans" fontWeight="700" fontSize="9.5" fill="#fff">
              W
            </text>
          </svg>
        </TaskItem>
        <TaskItem>
          <svg width="22" height="22" viewBox="0 0 22 22">
            <path d="M2 13c0-5 4-9 9-8 4 1 7 4 6 8-1 3-4 2-5 4s-2 3-5 2-5-3-5-6z" fill="#cfd8dc" />
            <circle cx="7" cy="10" r="1.6" fill="#4a90d9" />
            <circle cx="11" cy="8.5" r="1.6" fill="#58b368" />
            <circle cx="6" cy="14" r="1.6" fill="#e25b4a" />
            <path d="M14 11L20 1l1.5 1L16 12z" fill="#e8b93c" />
          </svg>
        </TaskItem>
        <TaskItem $active>
          <svg width="22" height="22" viewBox="0 0 24 24">
            <circle cx="12" cy="12" r="11" fill="#e0483c" />
            <path d="M12 12L21.5 6.5A11 11 0 0 1 12 23z" fill="#f4c20d" />
            <path d="M12 12L12 23A11 11 0 0 1 2.5 6.5z" fill="#2f9e4f" />
            <circle cx="12" cy="12" r="5" fill="#fff" />
            <circle cx="12" cy="12" r="4" fill="#3f86e8" />
          </svg>
        </TaskItem>
        <TaskItem $current $active>
          <svg width="22" height="20" viewBox="0 0 22 20">
            <rect x="9" y="2" width="12" height="16" fill="none" stroke="#b5dcc6" />
            <path d="M9 6h12M9 10h12M9 14h12M15 2v16" stroke="#b5dcc6" />
            <rect x="0" y="2" width="11" height="16" fill="#1f7a4a" />
            <text x="2.4" y="14" fontFamily="Liberation Sans" fontWeight="700" fontSize="11" fill="#fff">
              x
            </text>
          </svg>
        </TaskItem>
        <TaskItem $active>
          <svg width="24" height="26" viewBox="0 0 24 26">
            <rect x="1" y="1" width="22" height="24" rx="10" fill="#1f6fe0" />
            <text x="5.6" y="19" fontFamily="Liberation Sans" fontWeight="700" fontSize="18" fill="#fff">
              Z
            </text>
          </svg>
        </TaskItem>

        <Tray>
          <TrayIcon $w={15}>
            <svg width="12" height="7" viewBox="0 0 12 7" fill="none" stroke="#eef1f4" strokeWidth="1.2">
              <path d="M1 6l5-5 5 5" />
            </svg>
          </TrayIcon>
          <TrayIcon $w={14}>
            <svg width="11" height="16" viewBox="0 0 11 16" fill="none" stroke="#dfe3e7">
              <path d="M2 1h7M2 15h7" />
              <rect x="1" y="4" width="9" height="8" rx="3" />
              <rect x="6" y="6" width="2" height="3" fill="#dfe3e7" />
            </svg>
          </TrayIcon>
          <TrayIcon $w={17}>
            <svg width="17" height="11" viewBox="0 0 17 11" fill="#e8ecef">
              <path d="M4 11a3.5 3.5 0 0 1-.5-7A5 5 0 0 1 13 4a3.6 3.6 0 0 1 0 7z" />
            </svg>
          </TrayIcon>
          <TrayIcon $w={14}>
            <svg width="11" height="18" viewBox="0 0 11 18" fill="none">
              <rect x="3" y="0" width="5" height="12" rx="2.5" fill="#e8ecef" />
              <path d="M1 9c0 6 9 6 9 0M5.5 14v3M2.5 17h6" stroke="#e8ecef" strokeWidth="1" />
            </svg>
          </TrayIcon>
          <TrayIcon $w={17}>
            <svg width="16" height="12" viewBox="0 0 16 12" fill="none" stroke="#e8ecef">
              <rect x="4" y="3" width="11.5" height="7" rx="1" />
              <path d="M1 1l3 3M1 1v3" />
            </svg>
          </TrayIcon>
          <TrayIcon $w={17}>
            <svg width="15" height="15" viewBox="0 0 15 15" fill="none" stroke="#e8ecef">
              <rect x="4" y="1" width="10.5" height="8" />
              <path d="M.5 1v4h3M9 9v4M6 13.5h6" />
            </svg>
          </TrayIcon>
          <TrayIcon $w={15}>
            <svg width="15" height="12" viewBox="0 0 15 12" fill="none" stroke="#e8ecef">
              <path d="M1 4h2l3-3v10L3 8H1z" />
              <path d="M9 4l4 4M13 4l-4 4" />
            </svg>
          </TrayIcon>
          <Clock>
            9:08 AM
            <br />
            3/2/2024
          </Clock>
          <Notify>
            <svg width="22" height="26" viewBox="0 0 22 26">
              <path d="M1 4h16v12H9l-3 3v-3H1z" fill="#e8ecef" />
              <path d="M4 7h10M4 10h10M4 13h7" stroke="#1a2b3a" />
              <circle cx="15" cy="18" r="6.5" fill="#1a2b3a" stroke="#e8ecef" />
              <text x="13" y="21.5" fontFamily="Liberation Sans" fontSize="10" fill="#e8ecef">
                1
              </text>
            </svg>
          </Notify>
        </Tray>
      </Taskbar>
    </Window>
  );
}
